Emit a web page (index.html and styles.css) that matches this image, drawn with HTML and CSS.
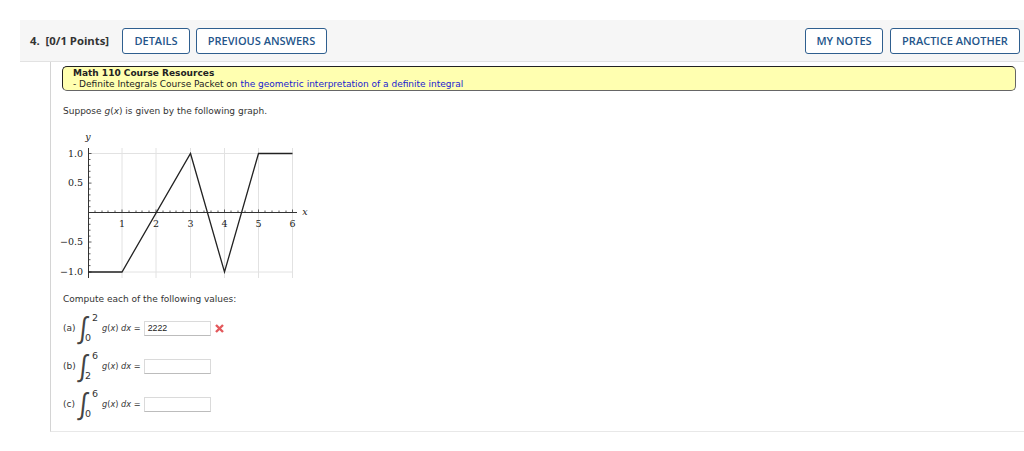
FILE: index.html
```html
<!DOCTYPE html>
<html>
<head>
<meta charset="utf-8">
<link rel="stylesheet" href="styles.css">
</head>
<body>
<div class="question">
  <div class="qhead">
    <div class="qnum">4.&nbsp; [0/1 Points]</div>
    <div class="btns">
      <button class="btn w-details">DETAILS</button>
      <button class="btn w-prev">PREVIOUS ANSWERS</button>
    </div>
    <div class="btns right">
      <button class="btn w-notes">MY NOTES</button>
      <button class="btn w-practice">PRACTICE ANOTHER</button>
    </div>
  </div>
  <div class="qbody">
    <div class="resources">
      <div class="res-title">Math 110 Course Resources</div>
      <div class="res-line">- Definite Integrals Course Packet on <a class="res-link" href="#">the geometric interpretation of a definite integral</a></div>
    </div>
    <p class="txt">Suppose <i>g</i>(<i>x</i>) is given by the following graph.</p>
    <svg class="graph" width="265" height="160" viewBox="55 125 265 160">
      <g stroke="#e2e2e2" stroke-width="1">
        <line x1="88" y1="153.5" x2="293" y2="153.5"/>
        <line x1="88" y1="272" x2="293" y2="272"/>
        <line x1="122" y1="148" x2="122" y2="278"/>
        <line x1="156" y1="148" x2="156" y2="278"/>
        <line x1="190.5" y1="148" x2="190.5" y2="278"/>
        <line x1="224.5" y1="148" x2="224.5" y2="278"/>
        <line x1="258.5" y1="148" x2="258.5" y2="278"/>
        <line x1="292.5" y1="148" x2="292.5" y2="278"/>
      </g>
      <g stroke="#333" stroke-width="1">
        <line x1="88" y1="212.5" x2="297" y2="212.5"/>
        <line x1="88.5" y1="148" x2="88.5" y2="278"/>
      </g>
      <g stroke="#333" stroke-width="0.8">
        <path d="M95 212.5v-2M102 212.5v-2M108 212.5v-2M115 212.5v-2M122 212.5v-3M129 212.5v-2M136 212.5v-2M142 212.5v-2M149 212.5v-2M156 212.5v-3M163 212.5v-2M170 212.5v-2M176 212.5v-2M183 212.5v-2M190.5 212.5v-3M197 212.5v-2M204 212.5v-2M211 212.5v-2M218 212.5v-2M224.5 212.5v-3M231 212.5v-2M238 212.5v-2M245 212.5v-2M252 212.5v-2M258.5 212.5v-3M265 212.5v-2M272 212.5v-2M279 212.5v-2M286 212.5v-2M292.5 212.5v-3"/>
        <path d="M88.5 159.5h2M88.5 165.4h2M88.5 171.3h2M88.5 177.2h2M88.5 183.1h3M88.5 189h2M88.5 194.9h2M88.5 200.8h2M88.5 206.7h2M88.5 153.5h3M88.5 218.4h2M88.5 224.3h2M88.5 230.2h2M88.5 236.1h2M88.5 242h3M88.5 247.9h2M88.5 253.8h2M88.5 259.7h2M88.5 265.6h2M88.5 272h3"/>
      </g>
      <polyline fill="none" stroke="#222" stroke-width="1.3" points="88,272 122,272 190.5,153.5 224.5,272 258.5,153.5 292.5,153.5"/>
      <g class="tick" font-size="9.5" fill="#222">
        <text x="122" y="227" text-anchor="middle">1</text>
        <text x="156" y="227" text-anchor="middle">2</text>
        <text x="190.5" y="227" text-anchor="middle">3</text>
        <text x="224.5" y="227" text-anchor="middle">4</text>
        <text x="258.5" y="227" text-anchor="middle">5</text>
        <text x="292.5" y="227" text-anchor="middle">6</text>
        <text x="83" y="156.5" text-anchor="end">1.0</text>
        <text x="83" y="186" text-anchor="end">0.5</text>
        <text x="83" y="245" text-anchor="end">−0.5</text>
        <text x="83" y="275" text-anchor="end">−1.0</text>
        <text x="88" y="140" text-anchor="middle" font-style="italic">y</text>
        <text x="305" y="215" text-anchor="middle" font-style="italic">x</text>
      </g>
    </svg>
    <p class="txt compute">Compute each of the following values:</p>
    <div class="row">
      <span class="lbl">(a)</span>
      <span class="integral"><span class="int">∫</span><span class="lims"><span class="up">2</span><span class="lo">0</span></span></span>
      <span class="expr"><i>g</i>(<i>x</i>) <i>dx</i> =</span>
      <span class="input">2222</span>
      <svg class="wrong" width="9" height="9" viewBox="0 0 9 9"><path d="M1 1L8 8M8 1L1 8" stroke="#e3595c" stroke-width="2.4"/></svg>
    </div>
    <div class="row">
      <span class="lbl">(b)</span>
      <span class="integral"><span class="int">∫</span><span class="lims"><span class="up">6</span><span class="lo">2</span></span></span>
      <span class="expr"><i>g</i>(<i>x</i>) <i>dx</i> =</span>
      <span class="input"></span>
    </div>
    <div class="row">
      <span class="lbl">(c)</span>
      <span class="integral"><span class="int">∫</span><span class="lims"><span class="up">6</span><span class="lo">0</span></span></span>
      <span class="expr"><i>g</i>(<i>x</i>) <i>dx</i> =</span>
      <span class="input"></span>
    </div>
  </div>
</div>
</body>
</html>
```

FILE: styles.css
```css
html, body {
  margin: 0;
  padding: 0;
  background: #fff;
}
.question {
  margin: 20px 0 0 20px;
}
.qhead {
  display: flex;
  align-items: center;
  height: 41px;
  background: #f6f6f6;
  border-bottom: 1px solid #e2e2e2;
  padding-left: 10px;
  padding-right: 4px;
}
.qnum {
  font-family: "Open Sans", sans-serif;
  font-weight: 700;
  font-size: 11.3px;
  color: #333;
  width: 92px;
}
.btns {
  display: flex;
  gap: 6px;
}
.btns.right {
  margin-left: auto;
  gap: 7px;
}
.btn {
  font-family: "Open Sans", sans-serif;
  font-weight: 600;
  font-size: 11px;
  color: #24558a;
  background: #fff;
  border: 1.5px solid #2f5f8f;
  border-radius: 3px;
  height: 26px;
  padding: 0;
  line-height: 1;
  margin: 0;
  text-align: center;
}
.w-details { width: 68px; }
.w-prev { width: 131px; }
.w-notes { width: 78px; }
.w-practice { width: 130px; }
.qbody {
  margin-left: 30px;
  border-left: 1px solid #d4d4d4;
  border-bottom: 1px solid #e8e8e8;
  padding: 4px 8px 8px 11px;
  font-family: "DejaVu Sans", Verdana, sans-serif;
  color: #333;
}
.resources {
  background: #ffffb0;
  border: 1px solid #666;
  border-top-color: #222;
  border-left-color: #222;
  border-radius: 5px;
  padding: 1px 10px 1px 10px;
  height: 21px;
  font-size: 9px;
  line-height: 10.5px;
  color: #222;
}
.res-title {
  font-weight: 700;
}
.res-link {
  color: #1a1ad0;
  text-decoration: none;
}
.txt {
  margin: 14px 0 0 0;
  font-size: 9px;
  line-height: 12px;
  padding-left: 1px;
}
.graph {
  display: block;
  margin: 8px 0 0 -7px;
}
.tick {
  font-family: "DejaVu Serif", "Liberation Serif", serif;
}
.compute {
  margin-top: 8px;
}
.row {
  display: flex;
  align-items: center;
  height: 38px;
  font-size: 9px;
  padding-left: 1px;
  white-space: nowrap;
}
.row > * {
  flex-shrink: 0;
}
.compute + .row {
  margin-top: 4px;
}
.lbl {
  width: 16px;
}
.integral {
  display: flex;
  align-items: stretch;
  height: 30px;
  margin-left: 1px;
}
.int {
  font-family: "Liberation Sans", Arial, sans-serif;
  font-size: 30px;
  line-height: 30px;
  display: block;
  transform: scaleX(0.8) skewX(-8deg);
  transform-origin: left center;
  width: 9px;
  color: #444;
}
.lims {
  display: flex;
  flex-direction: column;
  justify-content: space-between;
  font-size: 9.5px;
  line-height: 10px;
}
.up {
  margin-left: 3px;
}
.lo {
  margin-left: -4px;
}
.expr {
  margin-left: 4px;
  margin-right: 3px;
  font-size: 8.2px;
}
.expr i {
  font-style: italic;
}
.input {
  box-sizing: border-box;
  width: 67px;
  height: 15px;
  border: 1px solid #dadada;
  border-bottom-color: #bcbcbc;
  font-family: "Liberation Sans", Arial, sans-serif;
  font-size: 8.8px;
  line-height: 13px;
  padding-left: 3px;
  color: #222;
}
.wrong {
  margin-left: 4px;
}
```
